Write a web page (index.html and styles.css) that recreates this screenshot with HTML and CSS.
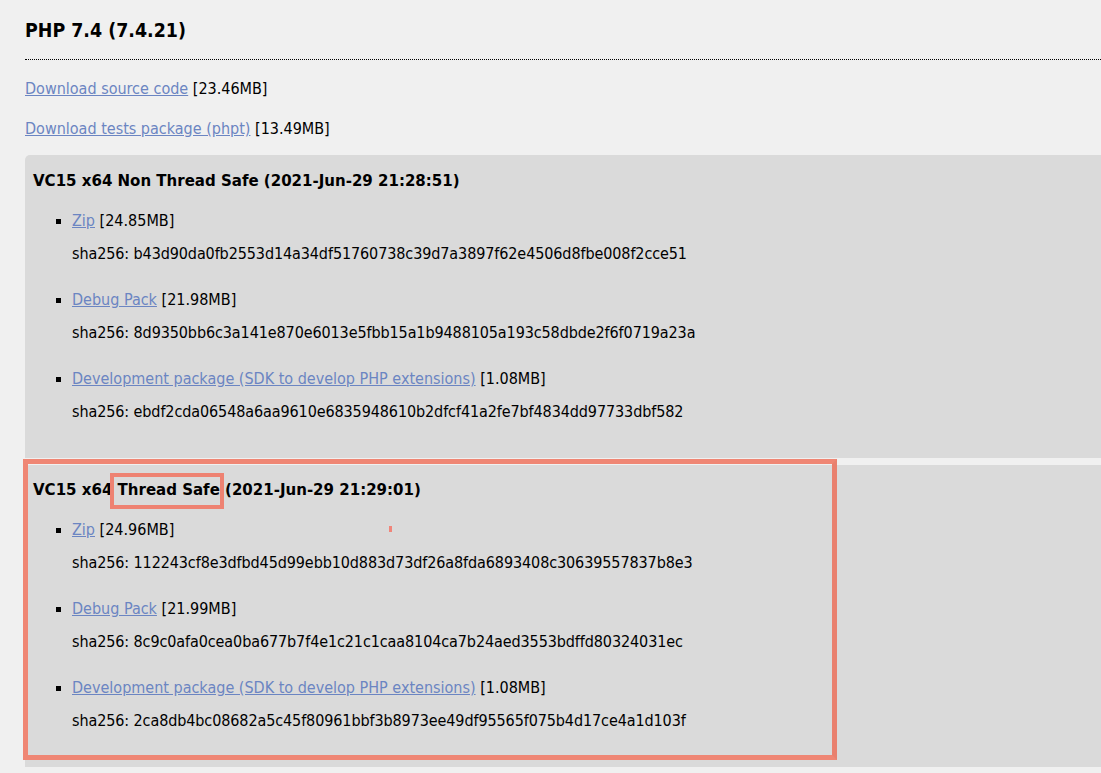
FILE: index.html
```html
<!DOCTYPE html>
<html>
<head>
<meta charset="utf-8">
<title>PHP 7.4 downloads</title>
<link rel="stylesheet" href="styles.css">
</head>
<body>
<div class="content">
  <h3 class="title">PHP 7.4 (7.4.21)</h3>
  <div class="rule"></div>
  <p class="dl"><a href="#">Download source code</a> [23.46MB]</p>
  <p class="dl"><a href="#">Download tests package (phpt)</a> [13.49MB]</p>

  <div class="build">
    <h4 class="build-title">VC15 x64 Non Thread Safe (2021-Jun-29 21:28:51)</h4>
    <ul class="files">
      <li><span class="name"><a href="#">Zip</a> [24.85MB]</span><span class="sha">sha256: b43d90da0fb2553d14a34df51760738c39d7a3897f62e4506d8fbe008f2cce51</span></li>
      <li><span class="name"><a href="#">Debug Pack</a> [21.98MB]</span><span class="sha">sha256: 8d9350bb6c3a141e870e6013e5fbb15a1b9488105a193c58dbde2f6f0719a23a</span></li>
      <li><span class="name"><a href="#">Development package (SDK to develop PHP extensions)</a> [1.08MB]</span><span class="sha">sha256: ebdf2cda06548a6aa9610e6835948610b2dfcf41a2fe7bf4834dd97733dbf582</span></li>
    </ul>
  </div>

  <div class="build build-second">
    <h4 class="build-title">VC15 x64 <span class="mark">Thread Safe</span> (2021-Jun-29 21:29:01)</h4>
    <ul class="files">
      <li><span class="name"><a href="#">Zip</a> [24.96MB]</span><span class="sha">sha256: 112243cf8e3dfbd45d99ebb10d883d73df26a8fda6893408c30639557837b8e3</span></li>
      <li><span class="name"><a href="#">Debug Pack</a> [21.99MB]</span><span class="sha">sha256: 8c9c0afa0cea0ba677b7f4e1c21c1caa8104ca7b24aed3553bdffd80324031ec</span></li>
      <li><span class="name"><a href="#">Development package (SDK to develop PHP extensions)</a> [1.08MB]</span><span class="sha">sha256: 2ca8db4bc08682a5c45f80961bbf3b8973ee49df95565f075b4d17ce4a1d103f</span></li>
    </ul>
    <div class="highlight"></div>
    <div class="dot"></div>
  </div>
</div>
</body>
</html>
```
FILE: styles.css
```css
html, body {
  margin: 0;
  padding: 0;
}
body {
  background: #f0f0f0;
  color: #000;
  font-family: "DejaVu Sans Condensed", "DejaVu Sans", sans-serif;
  font-size: 16px;
  line-height: 20px;
  overflow: hidden;
}
.content {
  padding: 20px 0 0 25px;
}
.title {
  margin: 0;
  font-size: 19.4px;
  line-height: 22px;
  font-weight: bold;
}
.rule {
  margin-top: 17px;
  border-top: 1px dotted #000;
  height: 0;
}
.dl {
  margin: 19px 0 0;
}
.dl + .dl {
  margin-top: 20px;
}
a {
  color: #6b85c2;
  text-decoration: underline;
}
.build {
  position: relative;
  margin-top: 16px;
  background: #dadada;
  border-top-left-radius: 5px;
  padding: 15px 0 36px 8px;
}
.build-second {
  margin-top: 7px;
  padding-top: 14px;
}
.build-title {
  margin: 0;
  font-size: 16.7px;
  line-height: 20px;
  font-weight: bold;
}
.files {
  margin: 21px 0 0;
  padding: 0 0 0 39px;
  list-style: square;
}
.files li {
  display: list-item;
}
.files li + li {
  margin-top: 26px;
}
.files li::marker {
  font-size: 15px;
}
.name, .sha {
  display: block;
}
.sha {
  margin-top: 13px;
  letter-spacing: -0.1px;
}
.mark {
  position: relative;
}
.mark::after {
  content: "";
  position: absolute;
  left: -8px;
  top: -6px;
  right: -4px;
  bottom: -10px;
  border: 4px solid #ee8272;
}
.highlight {
  position: absolute;
  left: -2px;
  top: -6px;
  width: 814px;
  height: 301px;
  box-sizing: border-box;
  border: 5px solid #ef8674;
  border-right-color: #e9806e;
  pointer-events: none;
}
.dot {
  position: absolute;
  left: 364px;
  top: 61px;
  width: 3px;
  height: 6px;
  background: #f0857a;
}
```
